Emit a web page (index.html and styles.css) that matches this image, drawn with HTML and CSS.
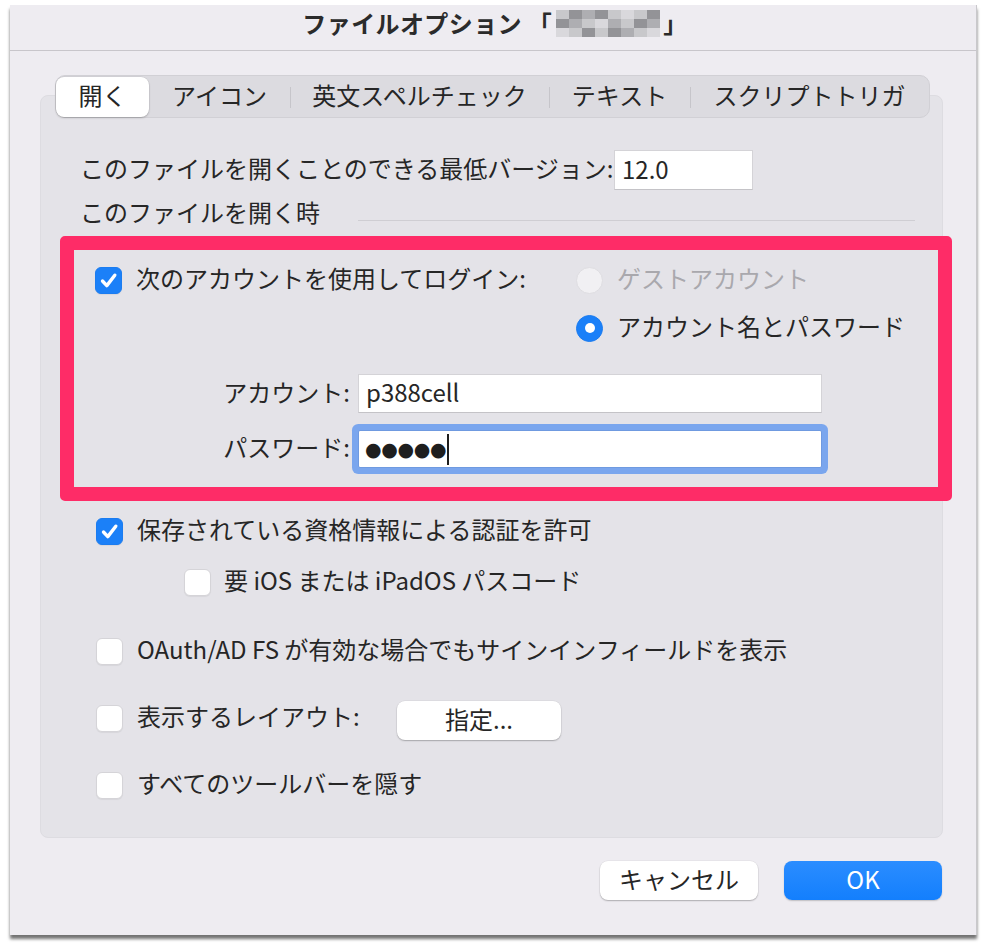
FILE: index.html
```html
<!DOCTYPE html>
<html lang="ja">
<head>
<meta charset="utf-8">
<title>ファイルオプション</title>
<link rel="stylesheet" href="styles.css">
</head>
<body>
<div class="window">
  <div class="titlebar">
    <span class="title">ファイルオプション 「</span>
    <span class="mosaic">
      <i class="g2"></i><i class="g3"></i><i class="g1"></i><i class="g3"></i><i class="g2"></i><i class="g4"></i><i class="g2"></i><i class="g3"></i>
      <i class="g3"></i><i class="g1"></i><i class="g2"></i><i class="g4"></i><i class="g1"></i><i class="g2"></i><i class="g3"></i><i class="g1"></i>
      <i class="g4"></i><i class="g2"></i><i class="g3"></i><i class="g2"></i><i class="g3"></i><i class="g1"></i><i class="g2"></i><i class="g4"></i>
    </span>
    <span class="title">」</span>
  </div>

  <div class="tabview">
    <div class="tabs">
      <div class="tab t1 sel">開く</div>
      <div class="tab t2">アイコン</div>
      <div class="tab t3 sep">英文スペルチェック</div>
      <div class="tab t4 sep">テキスト</div>
      <div class="tab t5 sep">スクリプトトリガ</div>
    </div>
    <div class="panel">
      <div class="version">
        <span class="vlabel txt">このファイルを開くことのできる最低バージョン:</span>
        <div class="field vfield">12.0</div>
      </div>
      <div class="group">
        <span class="glabel txt">このファイルを開く時</span>
        <div class="rule"></div>
      </div>

      <div class="highlight">
        <div class="login">
          <div class="check loginCheck">
            <span class="cb on"><svg viewBox="0 0 27 27" width="27" height="27"><path d="M7.5 14 L11.8 18.6 L19.8 8.2" fill="none" stroke="#fff" stroke-width="3.4" stroke-linecap="round" stroke-linejoin="round"/></svg></span>
            <span class="txt">次のアカウントを使用してログイン:</span>
          </div>
          <div class="radios">
            <div class="radio dis"><span class="rb"></span><span class="txt">ゲストアカウント</span></div>
            <div class="radio"><span class="rb on"></span><span class="txt">アカウント名とパスワード</span></div>
          </div>
        </div>
        <div class="creds">
          <span class="lbl txt">アカウント:</span>
          <div class="field acc">p388cell</div>
          <span class="lbl txt">パスワード:</span>
          <div class="field pwd"><span class="dots">●●●●●</span><span class="caret"></span></div>
        </div>
      </div>

      <div class="options">
        <div class="check opt o1">
          <span class="cb on"><svg viewBox="0 0 27 27" width="27" height="27"><path d="M7.5 14 L11.8 18.6 L19.8 8.2" fill="none" stroke="#fff" stroke-width="3.4" stroke-linecap="round" stroke-linejoin="round"/></svg></span>
          <span class="txt">保存されている資格情報による認証を許可</span>
        </div>
        <div class="check opt o2 sub">
          <span class="cb"></span>
          <span class="txt">要 iOS または iPadOS パスコード</span>
        </div>
        <div class="check opt o3">
          <span class="cb"></span>
          <span class="txt">OAuth/AD FS が有効な場合でもサインインフィールドを表示</span>
        </div>
        <div class="check opt o4">
          <span class="cb"></span>
          <span class="layoutLabel txt">表示するレイアウト:</span>
          <button class="btn specify">指定...</button>
        </div>
        <div class="check opt o5">
          <span class="cb"></span>
          <span class="txt">すべてのツールバーを隠す</span>
        </div>
      </div>
    </div>
  </div>

  <div class="buttons">
    <button class="btn cancel">キャンセル</button>
    <button class="btn ok">OK</button>
  </div>
</div>
</body>
</html>
```

FILE: styles.css
```css
* { box-sizing: border-box; }

html, body {
  margin: 0;
  padding: 0;
  background: #ffffff;
  width: 988px;
  height: 952px;
  overflow: hidden;
}

body {
  font-family: "Noto Sans CJK JP", "Noto Sans", sans-serif;
  font-size: 24px;
  color: #262626;
  padding-top: 5px;
  padding-left: 10px;
}

.window {
  width: 967px;
  height: 930px;
  background: #eeecf1;
  border-right: 1px solid #c9c8cc;
  box-shadow: 0 4px 3px rgba(0, 0, 0, 0.55);
}

.txt { padding-bottom: 4px; line-height: 1; }

/* title bar */
.titlebar {
  height: 46px;
  border-bottom: 1px solid #c8c6cb;
  display: flex;
  align-items: center;
  justify-content: center;
  padding-left: 4px;
  padding-bottom: 10px;
}
.title {
  font-weight: bold;
  font-size: 24px;
  letter-spacing: 0.4px;
  color: #2b2b2b;
  line-height: 28px;
}
.mosaic {
  display: grid;
  grid-template-columns: repeat(8, 13px);
  grid-template-rows: repeat(3, 9px);
  margin: 1px 3px 0 4px;
}
.mosaic i { display: block; }
.g1 { background: #aeaeb2; }
.g2 { background: #c8c8cb; }
.g3 { background: #939397; }
.g4 { background: #d9d8dc; }

/* tab view */
.tabview {
  margin-top: 24px;
  margin-left: 30px;
  width: 903px;
}
.tabs {
  position: relative;
  z-index: 1;
  margin-left: 15px;
  width: 875px;
  height: 43px;
  background: #dcdbe0;
  border: 1px solid #d1d0d5;
  border-radius: 10px;
  display: flex;
  align-items: center;
  padding: 0;
}
.tab {
  height: 40px;
  display: flex;
  align-items: center;
  justify-content: center;
  position: relative;
  color: #262626;
  line-height: 1;
  padding-bottom: 3px;
}
.t1 { width: 93px; }
.t2 { width: 141px; }
.t3 { width: 259px; }
.t4 { width: 141px; }
.t5 { flex: 1; }
.tab.sel {
  background: #ffffff;
  border-radius: 8px;
  box-shadow: 0 1px 2px rgba(0, 0, 0, 0.22), 0 0 0 0.5px rgba(0,0,0,0.08);
}
.tab.sep::before {
  content: "";
  position: absolute;
  left: 0;
  top: 10px;
  height: 21px;
  width: 1px;
  background: #c6c5ca;
}

.panel {
  margin-top: -23px;
  height: 743px;
  background: #e4e3e8;
  border: 1px solid #dddce1;
  border-radius: 8px;
  padding: 54px 27px 0 39px;
}

.version {
  display: flex;
  align-items: center;
  height: 40px;
}
.vlabel {
  flex: 0 0 534px;
  white-space: nowrap;
}
.field {
  background: #ffffff;
  border: 1px solid #d4d3d7;
  border-bottom-color: #c4c3c7;
  display: flex;
  align-items: center;
  padding-left: 7px;
  padding-bottom: 3px;
  line-height: 1;
}
.vfield {
  width: 139px;
  height: 40px;
}

.group {
  display: flex;
  align-items: center;
  height: 28px;
  margin-top: 10px;
}
.glabel {
  flex: 0 0 278px;
  white-space: nowrap;
}
.rule {
  flex: 1;
  height: 1px;
  background: #cfced3;
  margin-top: 12px;
}

/* annotation box */
.highlight {
  margin-top: 8px;
  margin-left: -20px;
  width: 892px;
  height: 265px;
  border: 14px solid #fe2c67;
  border-radius: 5px;
  padding-top: 16px;
}
.login {
  display: flex;
  align-items: flex-start;
  padding-left: 21px;
}
.check {
  display: flex;
  align-items: center;
  height: 28px;
  white-space: nowrap;
}
.loginCheck {
  flex: 0 0 481px;
}
.cb {
  flex: 0 0 27px;
  width: 27px;
  height: 27px;
  border-radius: 6px;
  background: #ffffff;
  border: 1px solid #d5d4d8;
  box-shadow: 0 1px 1px rgba(0, 0, 0, 0.06);
  margin-right: 14px;
  display: flex;
}
.cb.on {
  background: #1b80f8;
  border-color: #1b7cf0;
}
.cb svg { display: block; margin: -1px; }

.radios {
  display: flex;
  flex-direction: column;
  gap: 20px;
}
.radio {
  display: flex;
  align-items: center;
  height: 28px;
  white-space: nowrap;
}
.rb {
  width: 27px;
  height: 27px;
  border-radius: 50%;
  margin-right: 14px;
  background: #ffffff;
  border: 1px solid #d5d4d8;
  position: relative;
}
.radio.dis { color: #a9a8ad; }
.radio.dis .rb {
  background: #f1f0f3;
  border-color: #dedde1;
}
.rb.on {
  background: #1b80f8;
  border-color: #1b7cf0;
}
.rb.on::after {
  content: "";
  position: absolute;
  left: 7.5px;
  top: 7.5px;
  width: 10px;
  height: 10px;
  border-radius: 50%;
  background: #ffffff;
}

.creds {
  margin-top: 32px;
  display: grid;
  grid-template-columns: 276px 464px;
  grid-template-rows: 39px 38px;
  column-gap: 8px;
  row-gap: 17px;
  align-items: center;
}
.lbl {
  text-align: right;
  white-space: nowrap;
}
.acc { height: 39px; }
.pwd {
  height: 38px;
  border: 1px solid #6f9ae0;
  border-radius: 2px;
  box-shadow: 0 0 0 6px #7aa6ee;
  padding-left: 6px;
  padding-bottom: 0;
}
.dots {
  font-family: "DejaVu Sans", sans-serif;
  font-size: 19px;
  letter-spacing: -0.3px;
  color: #1e1e1e;
  line-height: 1;
}
.caret {
  width: 2px;
  height: 31px;
  background: #1e1e1e;
  margin-left: 1px;
}

/* options */
.options {
  margin-left: 16px;
}
.opt.o1 { margin-top: 16px; }
.opt.o2 { margin-top: 23px; margin-left: 88px; }
.opt.o2 .cb { margin-right: 13px; }
.opt.o3 { margin-top: 41px; }
.opt.o4 { margin-top: 39px; }
.opt.o5 { margin-top: 39px; }
.layoutLabel {
  flex: 0 0 260px;
}

.btn {
  font-family: "Noto Sans CJK JP", "Noto Sans", sans-serif;
  font-size: 24px;
  color: #262626;
  background: #ffffff;
  border: none;
  border-radius: 8px;
  box-shadow: 0 1px 1.5px rgba(0, 0, 0, 0.25), 0 0 0 0.5px rgba(0, 0, 0, 0.06);
  display: flex;
  align-items: center;
  justify-content: center;
  padding: 0 0 4px 0;
  line-height: 1;
}
.specify {
  width: 164px;
  height: 39px;
  margin-top: -3px;
  margin-bottom: -8px;
}

.buttons {
  display: flex;
  justify-content: flex-end;
  gap: 26px;
  margin-top: 23px;
  padding-right: 34px;
}
.cancel {
  width: 158px;
  height: 39px;
}
.ok {
  width: 158px;
  height: 39px;
  background: linear-gradient(#2b8dff, #137ffd);
  color: #ffffff;
  box-shadow: 0 1px 1.5px rgba(0, 0, 0, 0.2);
}
```
